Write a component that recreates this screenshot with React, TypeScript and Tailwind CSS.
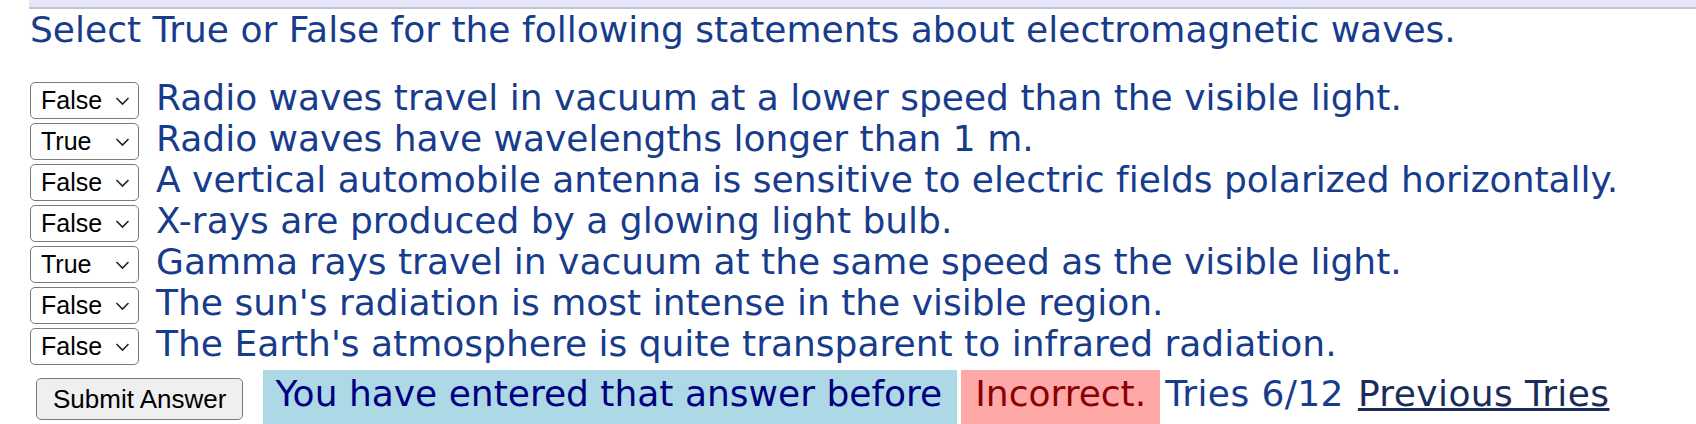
const statements: { answer: "True" | "False"; text: string }[] = [
  { answer: "False", text: "Radio waves travel in vacuum at a lower speed than the visible light." },
  { answer: "True", text: "Radio waves have wavelengths longer than 1 m." },
  { answer: "False", text: "A vertical automobile antenna is sensitive to electric fields polarized horizontally." },
  { answer: "False", text: "X-rays are produced by a glowing light bulb." },
  { answer: "True", text: "Gamma rays travel in vacuum at the same speed as the visible light." },
  { answer: "False", text: "The sun's radiation is most intense in the visible region." },
  { answer: "False", text: "The Earth's atmosphere is quite transparent to infrared radiation." },
];

function FakeSelect({ value }: { value: string }) {
  return (
    <div className="mt-[5px] flex h-[37px] w-[109px] shrink-0 items-center justify-between rounded-[5px] border-[1.5px] border-[#7a7a7a] bg-white pl-[10px] pr-[8px] font-['Liberation_Sans',Arial,sans-serif] text-[25px] leading-none text-black">
      <span>{value}</span>
      <svg width="15" height="10" viewBox="0 0 15 10" fill="none">
        <polyline points="1.5,2 7.5,8 13.5,2" stroke="#222" strokeWidth="1.6" />
      </svg>
    </div>
  );
}

export default function App() {
  return (
    <div className="min-h-[424px] overflow-hidden bg-white font-['DejaVu_Sans',Verdana,sans-serif] text-[36px] text-[#183c8c] [font-variant-ligatures:none]">
      <div className="ml-[29px] h-[9px] border-b-[2px] border-[#c4c4cc] bg-[#e6e6fa]" />
      <div className="pl-[30px]">
        <div className="h-[42px] leading-[42px] whitespace-nowrap">
          Select True or False for the following statements about electromagnetic waves.
        </div>
        <div className="mt-[26px] flex flex-col">
          {statements.map((s, i) => (
            <div key={i} className="flex h-[41px] items-start">
              <FakeSelect value={s.answer} />
              <span className="ml-[17px] leading-[41px] whitespace-nowrap">{s.text}</span>
            </div>
          ))}
        </div>
        <div className="mt-[6px] flex items-start whitespace-nowrap">
          <button className="ml-[6px] mt-[8px] h-[42px] rounded-[5px] border-[1.5px] border-[#7a7a7a] bg-[#efefef] px-[16px] font-['Liberation_Sans',Arial,sans-serif] text-[26px] leading-none text-black">
            Submit Answer
          </button>
          <span className="ml-[20px] bg-[#add8e6] pl-[12px] pr-[15px] pt-[3px] pb-[10px] leading-[42px] text-[#000080]">
            You have entered that answer before
          </span>
          <span className="ml-[4px] bg-[#ffa8a8] px-[14px] pt-[3px] pb-[10px] leading-[42px] text-[#8b0000]">
            Incorrect.
          </span>
          <span className="ml-[5px] pt-[3px] leading-[42px] tracking-[0.4px]">Tries 6/12</span>
          <a href="#" className="ml-[14px] pt-[3px] leading-[42px] tracking-[0.4px] text-[#1a2b5c] underline">
            Previous Tries
          </a>
        </div>
      </div>
    </div>
  );
}
